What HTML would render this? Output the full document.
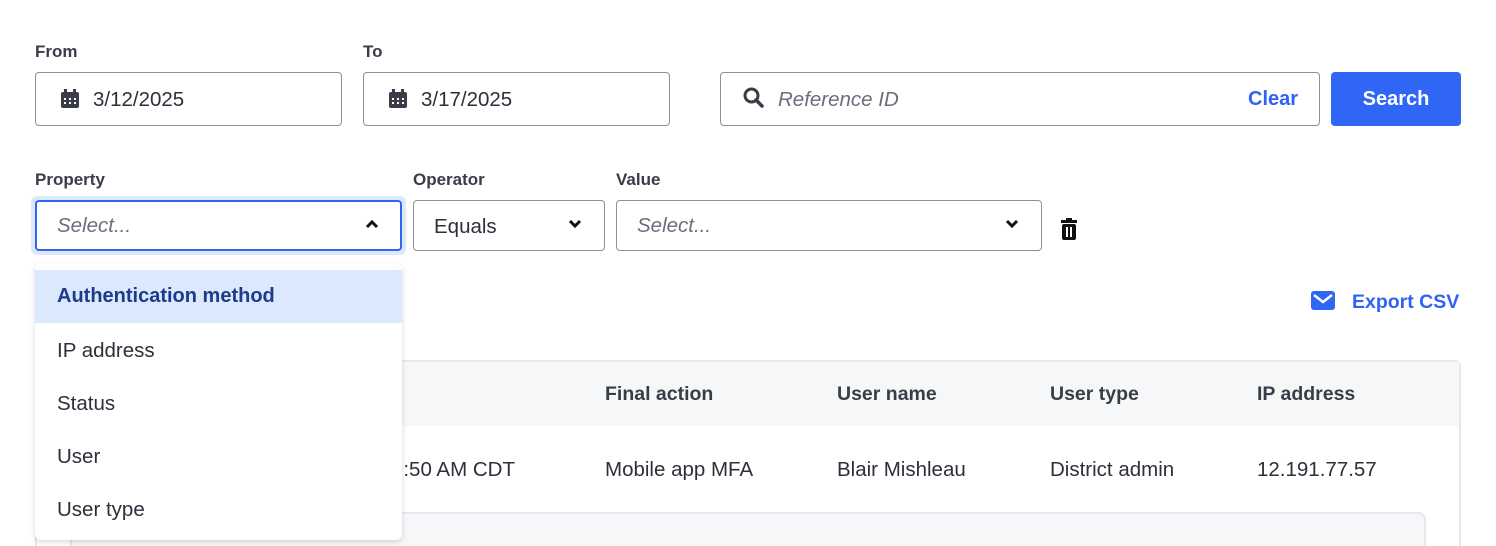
<!DOCTYPE html>
<html style="width:1496px;height:546px;overflow:hidden"><head><style>
*{box-sizing:border-box;margin:0;padding:0}
body{width:1496px;height:546px;overflow:hidden;background:#fff;font-family:"Liberation Sans",sans-serif;color:#2d2f3a;position:relative}
.abs{position:absolute}
.lbl{font-size:17px;font-weight:bold;color:#3a3c48}
.box{border:1px solid #8d8f9c;border-radius:4px;background:#fff}
.t18{font-size:20.5px}
.ph{font-style:italic;color:#6b6e7c}
.hd{font-size:19.5px;font-weight:bold;color:#3a3c48}
</style></head><body>
<div class="abs lbl" style="left:35px;top:42px">From</div>
<div class="abs lbl" style="left:363px;top:42px">To</div>
<div class="abs box" style="left:35px;top:72px;width:307px;height:54px"></div>
<div class="abs box" style="left:363px;top:72px;width:307px;height:54px"></div>
<svg class="abs" style="left:59px;top:88px" width="22" height="22" viewBox="0 0 22 22"><rect x="2" y="4" width="18" height="16" rx="2" fill="#3a3c48"/><rect x="5" y="1" width="3" height="5" fill="#3a3c48"/><rect x="14" y="1" width="3" height="5" fill="#3a3c48"/><g fill="#fff"><rect x="5" y="10" width="2" height="2"/><rect x="10" y="10" width="2" height="2"/><rect x="15" y="10" width="2" height="2"/><rect x="5" y="14" width="2" height="2"/><rect x="10" y="14" width="2" height="2"/><rect x="15" y="14" width="2" height="2"/></g></svg>
<svg class="abs" style="left:387px;top:88px" width="22" height="22" viewBox="0 0 22 22"><rect x="2" y="4" width="18" height="16" rx="2" fill="#3a3c48"/><rect x="5" y="1" width="3" height="5" fill="#3a3c48"/><rect x="14" y="1" width="3" height="5" fill="#3a3c48"/><g fill="#fff"><rect x="5" y="10" width="2" height="2"/><rect x="10" y="10" width="2" height="2"/><rect x="15" y="10" width="2" height="2"/><rect x="5" y="14" width="2" height="2"/><rect x="10" y="14" width="2" height="2"/><rect x="15" y="14" width="2" height="2"/></g></svg>
<div class="abs t18" style="left:93px;top:88px">3/12/2025</div>
<div class="abs t18" style="left:421px;top:88px">3/17/2025</div>
<div class="abs box" style="left:720px;top:72px;width:600px;height:54px"></div>
<svg class="abs" style="left:742px;top:86px" width="24" height="24" viewBox="0 0 24 24"><circle cx="9.5" cy="9.5" r="6.5" fill="none" stroke="#3a3c48" stroke-width="3"/><path d="M14 14l6 6" stroke="#3a3c48" stroke-width="3.5" stroke-linecap="round"/></svg>
<div class="abs t18 ph" style="left:778px;top:88px">Reference ID</div>
<div class="abs" style="left:1248px;top:88px;font-size:20px;font-weight:bold;color:#2f63f5">Clear</div>
<div class="abs" style="left:1331px;top:72px;width:130px;height:54px;background:#2f66f6;border-radius:4px;color:#fff;font-size:20px;font-weight:bold;text-align:center;line-height:54px">Search</div>

<div class="abs lbl" style="left:35px;top:170px">Property</div>
<div class="abs lbl" style="left:413px;top:170px">Operator</div>
<div class="abs lbl" style="left:616px;top:170px">Value</div>
<div class="abs" style="left:31px;top:196px;width:375px;height:59px;background:#dde8fc;border-radius:6px"></div>
<div class="abs" style="left:35px;top:200px;width:367px;height:51px;border:2px solid #2f66f6;border-radius:4px;background:#fff"></div>
<div class="abs t18 ph" style="left:57px;top:214px">Select...</div>
<svg class="abs" style="left:365px;top:218px" width="14" height="12" viewBox="0 0 14 12"><path d="M2 9l5-5 5 5" fill="none" stroke="#111" stroke-width="3"/></svg>
<div class="abs box" style="left:413px;top:200px;width:192px;height:51px"></div>
<div class="abs t18" style="left:434px;top:215px">Equals</div>
<svg class="abs" style="left:568px;top:218px" width="14" height="12" viewBox="0 0 14 12"><path d="M2 3l5 5 5-5" fill="none" stroke="#111" stroke-width="3"/></svg>
<div class="abs box" style="left:616px;top:200px;width:426px;height:51px"></div>
<div class="abs t18 ph" style="left:637px;top:214px">Select...</div>
<svg class="abs" style="left:1005px;top:218px" width="14" height="12" viewBox="0 0 14 12"><path d="M2 3l5 5 5-5" fill="none" stroke="#111" stroke-width="3"/></svg>
<svg class="abs" style="left:1059px;top:217px" width="20" height="24" viewBox="0 0 20 24"><rect x="2" y="3" width="16" height="3" fill="#111"/><rect x="7" y="1" width="6" height="3" fill="#111"/><rect x="3" y="7" width="14" height="16" rx="2" fill="#111"/><rect x="7" y="10" width="2" height="10" fill="#fff"/><rect x="11" y="10" width="2" height="10" fill="#fff"/></svg>

<svg class="abs" style="left:1311px;top:290px" width="24" height="22" viewBox="0 0 24 22"><rect x="0" y="1" width="24" height="19" rx="3" fill="#2f66f6"/><path d="M3 5l9 7 9-7" fill="none" stroke="#fff" stroke-width="2.5"/></svg>
<div class="abs" style="left:1352px;top:291px;font-size:19.5px;font-weight:bold;color:#2f63f5">Export CSV</div>

<div class="abs" style="left:35px;top:360px;width:1426px;height:186px;border:2px solid #e6e7ec;border-bottom:none;border-radius:6px 6px 0 0;background:#fff"></div>
<div class="abs" style="left:37px;top:362px;width:1422px;height:64px;background:#f6f7f9"></div>
<div class="abs hd" style="top:383px;left:605px">Final action</div>
<div class="abs hd" style="top:383px;left:837px">User name</div>
<div class="abs hd" style="top:383px;left:1050px">User type</div>
<div class="abs hd" style="top:383px;left:1257px">IP address</div>
<div class="abs t18" style="top:458px;right:981px;white-space:nowrap">:50 AM CDT</div>
<div class="abs t18" style="top:458px;left:605px">Mobile app MFA</div>
<div class="abs t18" style="top:458px;left:837px">Blair Mishleau</div>
<div class="abs t18" style="top:458px;left:1050px">District admin</div>
<div class="abs t18" style="top:458px;left:1257px">12.191.77.57</div>
<div class="abs" style="left:70px;top:512px;width:1356px;height:34px;border:2px solid #e6e7ec;border-bottom:none;border-radius:8px 8px 0 0;background:#f6f7f9"></div>

<div class="abs" style="left:35px;top:263px;width:367px;height:277px;background:#fff;border-radius:6px;box-shadow:0 2px 6px rgba(0,0,0,.15)">
<div style="margin-top:7px;height:53px;background:#dce8fb;padding-left:22px;line-height:53px;font-size:20px;font-weight:bold;color:#1e3a8a">Authentication method</div>
<div style="height:53px;padding-left:22px;line-height:55px;font-size:20.5px">IP address</div>
<div style="height:53px;padding-left:22px;line-height:55px;font-size:20.5px">Status</div>
<div style="height:53px;padding-left:22px;line-height:55px;font-size:20.5px">User</div>
<div style="height:53px;padding-left:22px;line-height:55px;font-size:20.5px">User type</div>
</div>
</body></html>
